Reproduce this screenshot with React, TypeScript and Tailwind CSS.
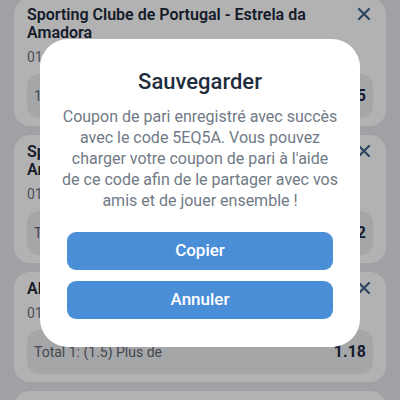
import React from 'react';

/* ============================================================
   Bet slip list (behind the dialog)
   ============================================================ */

interface BetCardProps {
  title: string;
  date: string;
  market: string;
  odds: string;
}

function CloseIcon() {
  return (
    <svg width="14" height="14" viewBox="0 0 14 14" className="text-[#3f6488]">
      <path d="M2 2 L12 12 M12 2 L2 12" stroke="currentColor" strokeWidth="2.2" strokeLinecap="round" />
    </svg>
  );
}

function BetCard({ title, date, market, odds }: BetCardProps) {
  return (
    <div className="mx-[14px] bg-white rounded-[16px] px-[13px] pt-2 pb-2">
      <div className="flex items-start justify-between gap-4">
        <p className="text-[16px] leading-[18px] font-semibold text-[#1d2a3b] pr-8">{title}</p>
        <div className="pt-[1px] pr-[2px]">
          <CloseIcon />
        </div>
      </div>
      <p className="mt-[6px] text-[14px] leading-[18px] text-[#6b7480]">{date}</p>
      <div className="mt-2 h-[44px] bg-[#eceef1] rounded-[12px] px-[7px] flex items-center justify-between">
        <span className="text-[14px] text-[#5f6771]">{market}</span>
        <span className="text-[16px] font-bold text-[#1d2a3b]">{odds}</span>
      </div>
    </div>
  );
}

const bets: BetCardProps[] = [
  { title: 'Sporting Clube de Portugal - Estrela da Amadora', date: '01/12 20:30', market: '1X2: 1', odds: '1.25' },
  { title: 'Sporting Clube de Portugal - Estrela da Amadora', date: '01/12 20:30', market: 'Total 1: (2.5) Plus de', odds: '1.42' },
  { title: 'Al Ahly - Zamalek', date: '01/12 18:00', market: 'Total 1: (1.5) Plus de', odds: '1.18' },
  { title: 'Real Madrid - Getafe', date: '02/12 21:00', market: '1X2: 1', odds: '1.30' },
];

/* ============================================================
   App
   ============================================================ */

export default function App() {
  return (
    <div
      className="relative w-[400px] h-[400px] overflow-hidden bg-[#e4e7eb]"
      style={{ fontFamily: 'Roboto, "Noto Sans", sans-serif' }}
    >
      {/* List */}
      <div className="-mt-[2px] flex flex-col gap-[9px]">
        {bets.map((b, i) => (
          <BetCard key={i} {...b} />
        ))}
      </div>

      {/* Overlay */}
      <div className="absolute inset-0 bg-black/30 flex items-start justify-center pt-[39px]">
        <div className="w-[320px] bg-white rounded-[28px] pt-[29px] pb-[28px] px-[27px] flex flex-col items-center">
          <h2 className="text-[22px] leading-[28px] font-medium text-[#1f2d3d]">Sauvegarder</h2>
          <p className="mt-[10px] text-center text-[16px] leading-[21px] text-[#6f7a86] whitespace-nowrap">
            Coupon de pari enregistré avec succès
            <br />
            avec le code 5EQ5A. Vous pouvez
            <br />
            charger votre coupon de pari à l'aide
            <br />
            de ce code afin de le partager avec vos
            <br />
            amis et de jouer ensemble !
          </p>
          <div className="mt-[21px] w-full flex flex-col gap-[11px]">
            <button className="h-[38px] w-full rounded-[9px] bg-[#4a8ed8] text-white text-[17px] font-medium">
              Copier
            </button>
            <button className="h-[38px] w-full rounded-[9px] bg-[#4a8ed8] text-white text-[17px] font-medium">
              Annuler
            </button>
          </div>
        </div>
      </div>
    </div>
  );
}
